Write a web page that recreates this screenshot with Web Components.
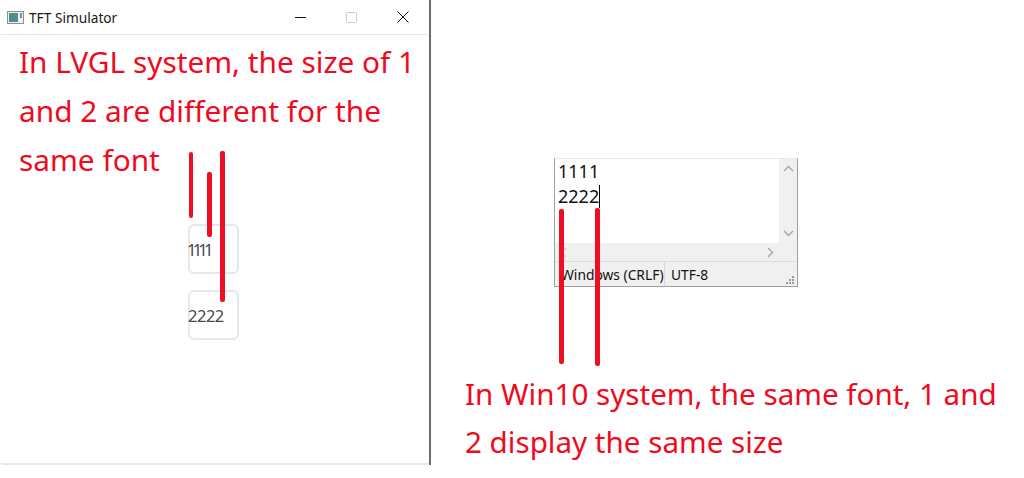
<!DOCTYPE html>
<html>
<head>
<meta charset="utf-8">
<title>TFT Simulator</title>
<style>
  html, body { margin: 0; background: #fff; }
  body { width: 1024px; height: 478px; overflow: hidden; position: relative; font-family: "Noto Sans", sans-serif; }
</style>
</head>
<body>
<shot-page>
  <sim-window title="TFT Simulator" slot="left">
    <red-note>In LVGL system, the size of 1 and 2 are different for the same font</red-note>
    <lv-box value="1111" tight></lv-box>
    <lv-box value="2222"></lv-box>
  </sim-window>
  <note-pad slot="right"></note-pad>
  <red-note slot="caption" style="font-size: 29.6px; line-height: 48px">In Win10 system, the same font, 1 and 2 display the same size</red-note>
  <red-mark slot="marks" x="188.5" y="152" h="66"></red-mark>
  <red-mark slot="marks" x="207" y="172" h="65"></red-mark>
  <red-mark slot="marks" x="220" y="151" h="151"></red-mark>
  <red-mark slot="marks" x="559" y="209" h="155"></red-mark>
  <red-mark slot="marks" x="595" y="208" h="158"></red-mark>
</shot-page>
<script>
const Colors = {
    red: '#f00a1e',
    mark: '#ee0f22',
    edge: '#e2e7f0',
    bar: '#f0f0f0',
    ink: '#46484b',
};

class ShotPage extends HTMLElement {
    constructor() {
        super();
        this.attachShadow({ mode: 'open' }).innerHTML = `
          <style>
            :host { display: flex; width: 1024px; height: 478px; }
            .left { width: 431px; height: 465px; flex: none; }
            .right { flex: 1; display: flex; flex-direction: column; padding: 158px 0 0 123px; }
            .caption { display: block; width: 545px; margin: 83px 0 0 -89px; }
          </style>
          <div class="left"><slot name="left"></slot></div>
          <div class="right">
            <slot name="right"></slot>
            <div class="caption"><slot name="caption"></slot></div>
          </div>
          <slot name="marks"></slot>
        `;
    }
}

class SimWindow extends HTMLElement {
    constructor() {
        super();
        const title = this.getAttribute('title');
        this.attachShadow({ mode: 'open' }).innerHTML = `
          <style>
            :host { display: flex; flex-direction: column; height: 100%; box-sizing: border-box; border-right: 2px solid #6b6b6b; }
            .bar { height: 34px; flex: none; display: flex; align-items: center; padding-left: 7px; font-size: 13.7px; color: #1a1a1a; }
            .bar svg { display: block; }
            .name { margin-left: 5px; flex: 1; }
            .ctl { width: 51px; display: flex; justify-content: center; }
            .ctl:last-child { margin-right: 1px; }
            .body { flex: 1; border: 1px solid ${Colors.edge}; border-width: 1px 0 2px; border-radius: 3px; padding: 2px 0 0 19px; }
            .text { width: 400px; }
          </style>
          <div class="bar">
            <svg width="17" height="13" viewBox="0 0 17 13">
              <rect x=".5" y=".5" width="16" height="12" fill="#eef0f2" stroke="#8d8f92"/>
              <rect x="2" y="2" width="9" height="9" fill="#4f8f88"/>
              <rect x="13" y="2" width="2" height="5" fill="#7d8f9c"/>
            </svg>
            <span class="name">${title}</span>
            <span class="ctl"><svg width="11" height="11" viewBox="0 0 11 11"><path d="M0 5.5H11" stroke="#111" stroke-width="1"/></svg></span>
            <span class="ctl"><svg width="11" height="11" viewBox="0 0 11 11"><rect x=".5" y=".5" width="10" height="10" rx="1" fill="none" stroke="#ccc"/></svg></span>
            <span class="ctl"><svg width="12" height="12" viewBox="0 0 12 12"><path d="M.5 .5L11.5 11.5M11.5 .5L.5 11.5" stroke="#111" stroke-width="1"/></svg></span>
          </div>
          <div class="body">
            <div class="text"><slot></slot></div>
          </div>
        `;
    }
}

class RedNote extends HTMLElement {
    constructor() {
        super();
        this.attachShadow({ mode: 'open' }).innerHTML = `
          <style>
            :host { display: block; color: ${Colors.red}; font: 29.8px/49px "Noto Sans", sans-serif; }
          </style>
          <slot></slot>
        `;
    }
}

class LvBox extends HTMLElement {
    constructor() {
        super();
        const tight = this.hasAttribute('tight');
        this.attachShadow({ mode: 'open' }).innerHTML = `
          <style>
            :host { display: flex; align-items: center; box-sizing: border-box; width: 51px; height: 50px; border: 2px solid ${Colors.edge}; border-radius: 6px; color: ${Colors.ink}; font-size: 16.5px; margin: 16px 0 0 169px; }
            :host([tight]) { margin-top: 40px; }
            span { margin-left: ${tight ? '-3px' : '-2px'}; letter-spacing: ${tight ? '-3.8px' : '-.5px'}; }
          </style>
          <span>${this.getAttribute('value')}</span>
        `;
    }
}

class NotePad extends HTMLElement {
    constructor() {
        super();
        this.attachShadow({ mode: 'open' }).innerHTML = `
          <style>
            :host { display: flex; flex-direction: column; box-sizing: border-box; width: 244px; height: 129px; background: ${Colors.bar}; border: 1px solid #a0a0a0; border-top-color: #e8e8e8; color: #111; }
            .top { display: flex; height: 84px; flex: none; }
            .edit { flex: 1; background: #fff; padding: 0 0 0 3px; font: 18px/25px "Noto Sans", sans-serif; white-space: pre; }
            .caret { display: inline-block; width: 1px; height: 23px; background: #000; vertical-align: -5px; }
            .vbar { width: 18px; display: flex; flex-direction: column; justify-content: space-between; align-items: center; padding: 6px 0; box-sizing: border-box; }
            .hbar { height: 19px; flex: none; display: flex; align-items: center; justify-content: space-between; padding: 0 23px 0 5px; box-sizing: border-box; border-bottom: 1px solid #dcdcdc; }
            .status { display: flex; flex: 1; align-items: center; font: 13.8px "Noto Sans", sans-serif; position: relative; }
            .cell { height: 100%; display: flex; align-items: center; }
            .cell + .cell { border-left: 1px solid #d9d9d9; padding-left: 6px; }
            .cell:first-child { width: 109px; overflow: hidden; padding-left: 6px; box-sizing: border-box; white-space: nowrap; }
            .grip { position: absolute; right: 2px; bottom: 1px; }
            svg { display: block; }
          </style>
          <div class="top">
            <div class="edit">1111
2222<span class="caret"></span></div>
            <div class="vbar">
              <svg width="11" height="7" viewBox="0 0 11 7"><path d="M1 6L5.5 1.5L10 6" fill="none" stroke="#a6a6a6" stroke-width="1.4"/></svg>
              <svg width="11" height="7" viewBox="0 0 11 7"><path d="M1 1L5.5 5.5L10 1" fill="none" stroke="#a6a6a6" stroke-width="1.4"/></svg>
            </div>
          </div>
          <div class="hbar">
            <svg width="7" height="11" viewBox="0 0 7 11"><path d="M6 1L1.5 5.5L6 10" fill="none" stroke="#cfcfcf" stroke-width="1.4"/></svg>
            <svg width="7" height="11" viewBox="0 0 7 11"><path d="M1 1L5.5 5.5L1 10" fill="none" stroke="#a6a6a6" stroke-width="1.4"/></svg>
          </div>
          <div class="status">
            <span class="cell">Windows (CRLF)</span>
            <span class="cell">UTF-8</span>
            <svg class="grip" width="10" height="10" viewBox="0 0 10 10" fill="#9a9a9a">
              <rect x="7" y="1" width="2" height="2"/><rect x="4" y="4" width="2" height="2"/><rect x="7" y="4" width="2" height="2"/>
              <rect x="1" y="7" width="2" height="2"/><rect x="4" y="7" width="2" height="2"/><rect x="7" y="7" width="2" height="2"/>
            </svg>
          </div>
        `;
    }
}

// hand drawn annotation strokes, their place on the shot is the content
class RedMark extends HTMLElement {
    constructor() {
        super();
        this.attachShadow({ mode: 'open' }).innerHTML = `
          <style>
            :host { position: absolute; width: 4.5px; border-radius: 2px; background: ${Colors.mark}; }
          </style>
        `;
        this.style.left = `${this.getAttribute('x')}px`;
        this.style.top = `${this.getAttribute('y')}px`;
        this.style.height = `${this.getAttribute('h')}px`;
    }
}

customElements.define('shot-page', ShotPage);
customElements.define('sim-window', SimWindow);
customElements.define('red-note', RedNote);
customElements.define('lv-box', LvBox);
customElements.define('note-pad', NotePad);
customElements.define('red-mark', RedMark);
</script>
</body>
</html>
